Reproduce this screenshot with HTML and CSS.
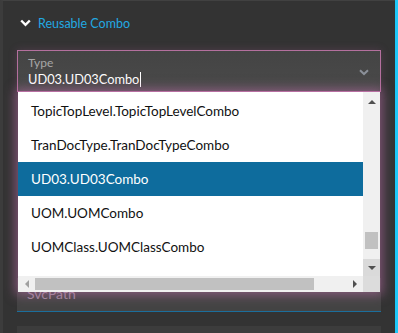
FILE: index.html
```html
<!DOCTYPE html>
<html>
<head>
<meta charset="utf-8">
<link rel="stylesheet" href="styles.css">
</head>
<body>
<div class="screen">
  <div class="panel">
    <div class="section-head">
      <svg class="head-chev" width="11" height="8" viewBox="0 0 11 8"><path d="M1.2 1.5 L5.5 5.8 L9.8 1.5" fill="none" stroke="#fff" stroke-width="2.4"/></svg>
      <span class="head-title">Reusable Combo</span>
    </div>
    <div class="form">
      <div class="combo-wrap">
        <div class="field field-focus">
          <div class="field-text">
            <div class="label">Type</div>
            <div class="value">UD03.UD03Combo<span class="caret"></span></div>
          </div>
          <svg class="field-chev" width="10" height="7" viewBox="0 0 10 7"><path d="M1 1.2 L5 5 L9 1.2" fill="none" stroke="#8b9099" stroke-width="2"/></svg>
        </div>
        <div class="dropdown">
          <div class="list">
            <div class="item">TopicTopLevel.TopicTopLevelCombo</div>
            <div class="item">TranDocType.TranDocTypeCombo</div>
            <div class="item selected">UD03.UD03Combo</div>
            <div class="item">UOM.UOMCombo</div>
            <div class="item">UOMClass.UOMClassCombo</div>
          </div>
          <div class="vbar">
            <div class="arrow-btn"><span class="tri tri-up"></span></div>
            <div class="vtrack"><div class="vthumb"></div></div>
            <div class="arrow-btn hover"><span class="tri tri-down"></span></div>
          </div>
          <div class="hbar">
            <div class="harrow"><span class="tri tri-left"></span></div>
            <div class="htrack"><div class="hthumb"></div></div>
            <div class="harrow"><span class="tri tri-right"></span></div>
          </div>
          <div class="corner"></div>
        </div>
      </div>
      <div class="hidden-fields"></div>
      <div class="field field-line">
        <div class="label dim">SvcPath</div>
      </div>
      <div class="field field-last"></div>
    </div>
  </div>
  <div class="accent"></div>
</div>
</body>
</html>
```
FILE: styles.css
```css
* { box-sizing: border-box; }
html, body { margin: 0; padding: 0; }
body {
  width: 398px;
  height: 333px;
  overflow: hidden;
  background: #333333;
  font-family: "Lato", "Open Sans", sans-serif;
}
.screen {
  display: flex;
  width: 398px;
  height: 333px;
}
.panel {
  flex: 1;
  border-left: 3px solid #3c3c3c;
  border-top: 1px solid #414141;
  background: #333333;
  overflow: hidden;
}
.accent {
  width: 3px;
  background: #1ec8f8;
}
.section-head {
  display: flex;
  align-items: center;
  height: 42px;
  padding-left: 17px;
  padding-top: 2px;
}
.head-chev { margin-right: 7px; }
.head-title {
  color: #22a9e2;
  font-size: 12.5px;
}
.form {
  padding: 7px 14px 0 14px;
}
.combo-wrap { position: relative; }
.field {
  display: flex;
  align-items: center;
  background: #474747;
}
.field-focus {
  height: 42px;
  border: 1px solid #b4709e;
  padding: 0 11px 0 10px;
  background: linear-gradient(#444444, #4a4a4a);
  box-shadow: 0 0 8px rgba(170, 90, 150, 0.25);
}
.field-text { flex: 1; padding-top: 1px; }
.label {
  color: #a6a6a6;
  font-size: 12px;
  line-height: 13px;
}
.value {
  color: #ffffff;
  font-size: 12.8px;
  line-height: 17px;
  margin-top: 2px;
}
.caret {
  display: inline-block;
  width: 1px;
  height: 15px;
  background: #fff;
  vertical-align: -3px;
  margin-left: 1px;
}
.field-chev { margin-top: 2px; }
.dropdown {
  position: absolute;
  left: 1px;
  right: 1px;
  top: 42px;
  height: 200px;
  background: #ffffff;
  display: grid;
  grid-template-columns: 1fr 17px;
  grid-template-rows: 1fr 16px;
  box-shadow: 0 0 10px 3px rgba(190, 110, 170, 0.55);
  z-index: 2;
}
.list {
  overflow: hidden;
  padding-top: 2px;
}
.item {
  height: 34px;
  display: flex;
  align-items: center;
  padding-left: 13px;
  font-size: 13.5px;
  color: #111111;
  white-space: nowrap;
}
.item.selected {
  background: #0e6c9d;
  color: #ffffff;
}
.vbar {
  background: #f0f0f0;
  display: flex;
  flex-direction: column;
  padding-top: 1px;
}
.arrow-btn {
  height: 17px;
  display: flex;
  align-items: center;
  justify-content: center;
}
.arrow-btn.hover { background: #dadada; }
.vtrack {
  flex: 1;
  display: flex;
  flex-direction: column;
  justify-content: flex-end;
  padding: 0 2px 10px 2px;
}
.vthumb {
  height: 17px;
  background: #c1c1c1;
}
.hbar {
  background: #f0f0f0;
  display: flex;
  align-items: stretch;
}
.harrow {
  width: 17px;
  display: flex;
  align-items: center;
  justify-content: center;
}
.htrack {
  flex: 1;
  padding: 2px 32px 2px 0;
  display: flex;
}
.hthumb {
  flex: 1;
  background: #c1c1c1;
}
.corner { background: #dcdcdc; }
.tri {
  width: 0;
  height: 0;
  border-style: solid;
  border-color: transparent;
}
.tri-up { border-width: 0 4px 4px 4px; border-bottom-color: #505050; }
.tri-down { border-width: 4px 4px 0 4px; border-top-color: #505050; }
.tri-left { border-width: 4px 4px 4px 0; border-right-color: #a0a0a0; }
.tri-right { border-width: 4px 0 4px 4px; border-left-color: #505050; }
.hidden-fields { height: 186px; }
.field-line {
  height: 34px;
  align-items: flex-start;
  padding: 8px 0 0 10px;
  background: #444444;
  border-bottom: 1px solid #1b6e9c;
}
.label.dim { color: #9d8a9c; font-size: 14px; line-height: 16px; }
.field-last {
  margin-top: 14px;
  height: 20px;
  background: #3c3c3c;
}
```
